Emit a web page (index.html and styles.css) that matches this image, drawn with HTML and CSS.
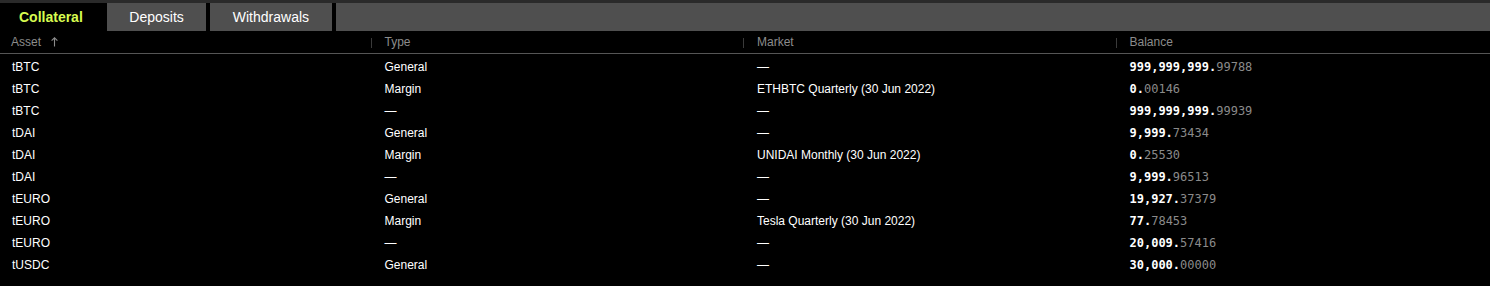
FILE: index.html
```html
<!DOCTYPE html>
<html lang="en">
<head>
<meta charset="utf-8">
<title>Collateral</title>
<link rel="stylesheet" href="styles.css">
</head>
<body>
<div class="tabbar">
  <div class="tab tab-active">Collateral</div>
  <div class="tab">Deposits</div>
  <div class="tab">Withdrawals</div>
  <div class="tab-fill"></div>
</div>
<div class="table">
  <div class="thead">
    <div class="th">Asset <svg class="sort" width="7" height="10" viewBox="0 0 7 10"><path d="M3.5 0.8V9.5M0.6 3.6L3.5 0.8L6.4 3.6" fill="none" stroke="currentColor" stroke-width="1.1"/></svg></div>
    <div class="th th-sep">Type</div>
    <div class="th th-sep">Market</div>
    <div class="th th-sep">Balance</div>
  </div>
  <div class="tbody">
    <div class="tr"><div class="td">tBTC</div><div class="td">General</div><div class="td">—</div><div class="td num"><b>999,999,999.</b><span>99788</span></div></div>
    <div class="tr"><div class="td">tBTC</div><div class="td">Margin</div><div class="td">ETHBTC Quarterly (30 Jun 2022)</div><div class="td num"><b>0.</b><span>00146</span></div></div>
    <div class="tr"><div class="td">tBTC</div><div class="td">—</div><div class="td">—</div><div class="td num"><b>999,999,999.</b><span>99939</span></div></div>
    <div class="tr"><div class="td">tDAI</div><div class="td">General</div><div class="td">—</div><div class="td num"><b>9,999.</b><span>73434</span></div></div>
    <div class="tr"><div class="td">tDAI</div><div class="td">Margin</div><div class="td">UNIDAI Monthly (30 Jun 2022)</div><div class="td num"><b>0.</b><span>25530</span></div></div>
    <div class="tr"><div class="td">tDAI</div><div class="td">—</div><div class="td">—</div><div class="td num"><b>9,999.</b><span>96513</span></div></div>
    <div class="tr"><div class="td">tEURO</div><div class="td">General</div><div class="td">—</div><div class="td num"><b>19,927.</b><span>37379</span></div></div>
    <div class="tr"><div class="td">tEURO</div><div class="td">Margin</div><div class="td">Tesla Quarterly (30 Jun 2022)</div><div class="td num"><b>77.</b><span>78453</span></div></div>
    <div class="tr"><div class="td">tEURO</div><div class="td">—</div><div class="td">—</div><div class="td num"><b>20,009.</b><span>57416</span></div></div>
    <div class="tr"><div class="td">tUSDC</div><div class="td">General</div><div class="td">—</div><div class="td num"><b>30,000.</b><span>00000</span></div></div>
  </div>
</div>
</body>
</html>
```
FILE: styles.css
```css
* { box-sizing: border-box; }
html, body {
  margin: 0;
  padding: 0;
  background: #000;
  color: #fff;
  font-family: "Liberation Sans", Arial, sans-serif;
  font-size: 12px;
}
.tabbar {
  display: flex;
  gap: 4px;
  border-top: 3px solid #2a2a2a;
  height: 31px;
  background: #000;
}
.tab {
  height: 28px;
  line-height: 28px;
  padding: 0 22.5px;
  background: #4f4f4f;
  color: #fff;
  font-size: 14px;
  white-space: nowrap;
}
.tab-active {
  background: #000;
  color: #d7fb50;
  font-weight: bold;
  padding: 0 20px 0 19px;
}
.tab-fill {
  flex: 1;
  height: 28px;
  background: #4f4f4f;
}
.thead, .tr {
  display: grid;
  grid-template-columns: repeat(4, 1fr);
}
.thead {
  height: 23px;
  border-bottom: 1px solid #555;
}
.th {
  position: relative;
  line-height: 22px;
  padding: 0 12px;
  color: #8c8c8c;
  display: flex;
  align-items: center;
}
.th:first-child { padding-left: 11px; }
.sort {
  margin-left: 10px;
  margin-top: -1px;
}
.th-sep::before {
  content: "";
  position: absolute;
  left: -2px;
  top: 7px;
  width: 1px;
  height: 10px;
  background: #3a3a3a;
}
.tbody { padding-top: 2px; }
.tr { height: 22px; }
.td {
  line-height: 22px;
  padding: 0 12px;
  white-space: nowrap;
}
.num {
  font-family: "DejaVu Sans Mono", "Liberation Mono", monospace;
  font-size: 12px;
}
.num b { font-weight: bold; color: #fff; }
.num span { color: #8a8a8a; }
```
